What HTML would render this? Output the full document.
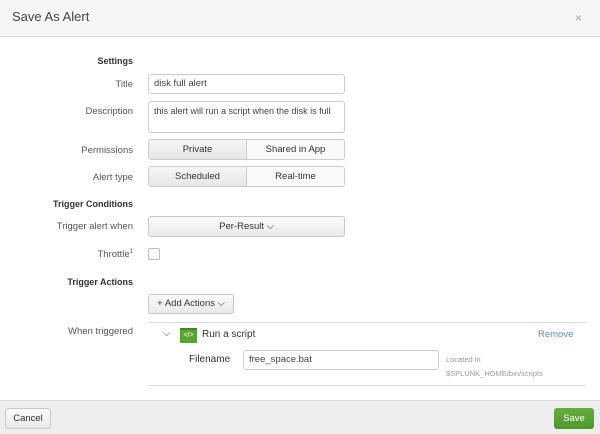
<!DOCTYPE html><html><head><style>
body{margin:0;width:600px;height:433px;background:#fff;font-family:"Liberation Sans",sans-serif;font-size:9.5px;color:#333;position:relative;overflow:hidden}
.a{position:absolute}
.hdr{left:0;top:0;width:600px;height:36px;background:#f5f5f5;border-bottom:1px solid #ddd}
.lbl{right:467px;text-align:right;white-space:nowrap;color:#555}
.b{font-weight:bold;color:#333;font-size:9px}
.in{border:1px solid #ccc;border-radius:3px;background:#fff;box-sizing:border-box;padding:0 5px;line-height:18px;color:#444}
.seg{display:flex;border:1px solid #ccc;border-radius:3px;box-sizing:border-box;overflow:hidden}
.seg div{flex:1;text-align:center;line-height:19px}
.on{background:linear-gradient(#f6f6f6,#e6e6e6)}
.off{background:#fafafa;border-left:1px solid #ccc}
.btn{border:1px solid #c8c8c8;border-radius:3px;background:linear-gradient(#fafafa,#eaeaea);box-sizing:border-box;text-align:center;color:#333}
</style></head><body>
<div class="a hdr"></div>
<div class="a" style="left:12px;top:9px;font-size:13px;color:#444">Save As Alert</div>
<div class="a" style="left:575px;top:11px;font-size:12px;color:#aaa">×</div>
<div class="a lbl b" style="top:56px">Settings</div>
<div class="a lbl" style="top:79px">Title</div>
<div class="a in" style="left:148px;top:74px;width:197px;height:20px">disk full alert</div>
<div class="a lbl" style="top:106px">Description</div>
<div class="a in" style="left:148px;top:101px;width:197px;height:32px;line-height:16px;padding-top:1px;font-size:9px;white-space:nowrap;overflow:hidden">this alert will run a script when the disk is full</div>
<div class="a lbl" style="top:145px">Permissions</div>
<div class="a seg" style="left:148px;top:139px;width:197px;height:21px"><div class="on">Private</div><div class="off">Shared in App</div></div>
<div class="a lbl" style="top:172px">Alert type</div>
<div class="a seg" style="left:148px;top:166px;width:197px;height:21px"><div class="on">Scheduled</div><div class="off">Real-time</div></div>
<div class="a lbl b" style="top:199px">Trigger Conditions</div>
<div class="a lbl" style="top:221px">Trigger alert when</div>
<div class="a btn" style="left:148px;top:216px;width:197px;height:21px;line-height:19px">Per-Result ⌵</div>
<div class="a lbl" style="top:249px">Throttle<sup style="font-size:6px">1</sup></div>
<div class="a" style="left:148px;top:248px;width:12px;height:12px;border:1px solid #bbb;border-radius:2px;box-sizing:border-box;background:#fafafa"></div>
<div class="a lbl b" style="top:277px">Trigger Actions</div>
<div class="a btn" style="left:148px;top:294px;width:86px;height:20px;line-height:18px">+ Add Actions ⌵</div>
<div class="a" style="left:148px;top:322px;width:438px;height:1px;background:#ddd"></div>
<div class="a lbl" style="top:326px">When triggered</div>
<div class="a" style="left:163px;top:328px;color:#666">⌵</div>
<div class="a" style="left:180px;top:328px;width:17px;height:15px;background:#5aa530;border-top:2px solid #3d8a1e;box-sizing:border-box;color:#fff;font-size:7px;text-align:center;line-height:12px">&lt;/&gt;</div>
<div class="a" style="left:202px;top:329px;font-size:10px">Run a script</div>
<div class="a" style="left:538px;top:329px;color:#5a90b8">Remove</div>
<div class="a" style="left:189px;top:354px;font-size:10px">Filename</div>
<div class="a in" style="left:243px;top:350px;width:196px;height:20px">free_space.bat</div>
<div class="a" style="left:446px;top:353px;font-size:7.5px;color:#999;line-height:14px">Located in<br>$SPLUNK_HOME/bin/scripts</div>
<div class="a" style="left:148px;top:385px;width:438px;height:1px;background:#ddd"></div>
<div class="a" style="left:0;top:400px;width:600px;height:33px;background:#eee;border-top:1px solid #ddd"></div>
<div class="a btn" style="left:5px;top:408px;width:46px;height:21px;line-height:19px">Cancel</div>
<div class="a" style="left:554px;top:408px;width:40px;height:21px;line-height:21px;background:linear-gradient(#65ac3f,#4e9a2a);border-radius:3px;color:#fff;text-align:center">Save</div>
</body></html>
